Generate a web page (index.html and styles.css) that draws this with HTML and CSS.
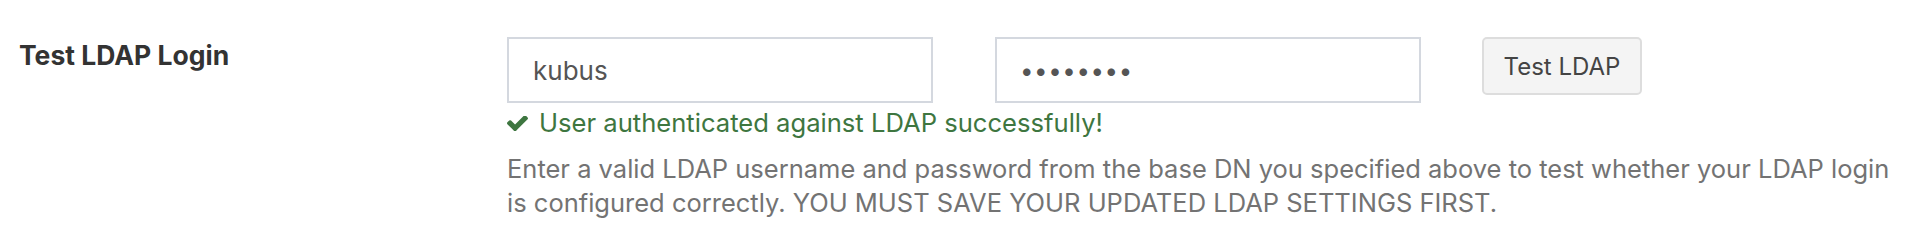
FILE: index.html
```html
<!DOCTYPE html>
<html lang="en">
<head>
<meta charset="utf-8">
<title>Test LDAP Login</title>
<link rel="stylesheet" href="styles.css">
</head>
<body>
<div class="form-row">
  <label class="row-label" for="ldap-user">Test LDAP Login</label>
  <div class="row-body">
    <div class="fields">
      <input class="field" id="ldap-user" type="text" value="kubus">
      <input class="field field-pass" type="password" value="12345678">
      <button class="btn" type="button">Test LDAP</button>
    </div>
    <div class="success">
      <svg class="check" viewBox="121 402 1550 1084" aria-hidden="true"><path d="M1671 566q0 40-28 68l-724 724-136 136q-28 28-68 28t-68-28l-136-136-362-362q-28-28-28-68t28-68l136-136q28-28 68-28t68 28l294 295 656-657q28-28 68-28t68 28l136 136q28 28 28 68z"/></svg>
      <span>User authenticated against LDAP successfully!</span>
    </div>
    <p class="help">Enter a valid LDAP username and password from the base DN you specified above to test whether your LDAP login is configured correctly. YOU MUST SAVE YOUR UPDATED LDAP SETTINGS FIRST.</p>
  </div>
</div>
</body>
</html>
```
FILE: styles.css
```css
html, body {
  margin: 0;
  padding: 0;
  background: #ffffff;
}

body {
  font-family: Inter, "Liberation Sans", sans-serif;
  color: #333333;
}

.form-row {
  display: flex;
  align-items: flex-start;
  padding-top: 37px;
}

.row-label {
  width: 488px;
  padding-left: 19px;
  padding-top: 1px;
  font-size: 26.5px;
  line-height: 34px;
  font-weight: 700;
  color: #333333;
}

.row-body {
  width: 1396px;
}

.fields {
  display: flex;
  align-items: flex-start;
  gap: 62px;
}

.field {
  box-sizing: border-box;
  width: 426px;
  height: 66px;
  margin: 0;
  padding: 0 24px;
  border: 2px solid #d4d8df;
  border-radius: 0;
  background: #ffffff;
  font-family: Inter, "Liberation Sans", sans-serif;
  font-size: 26px;
  color: #555555;
  outline: none;
}

.field-pass {
  padding-left: 23px;
  font-size: 24px;
  letter-spacing: 0.6px;
}

.btn {
  box-sizing: border-box;
  width: 160px;
  height: 58px;
  margin: 0 0 0 -1px;
  padding: 0;
  border: 2px solid #dddddd;
  border-radius: 5px;
  background: #f4f4f4;
  font-family: Inter, "Liberation Sans", sans-serif;
  font-size: 24px;
  color: #444444;
}

.success {
  display: flex;
  align-items: center;
  gap: 11px;
  margin-top: 3px;
  height: 34px;
  font-size: 25.6px;
  line-height: 34px;
  color: #3e7640;
}

.check {
  width: 21px;
  height: 15px;
  fill: #3e7640;
  flex: none;
}

.help {
  margin: 12px 0 0;
  font-size: 25.5px;
  line-height: 34px;
  color: #737373;
}
```
